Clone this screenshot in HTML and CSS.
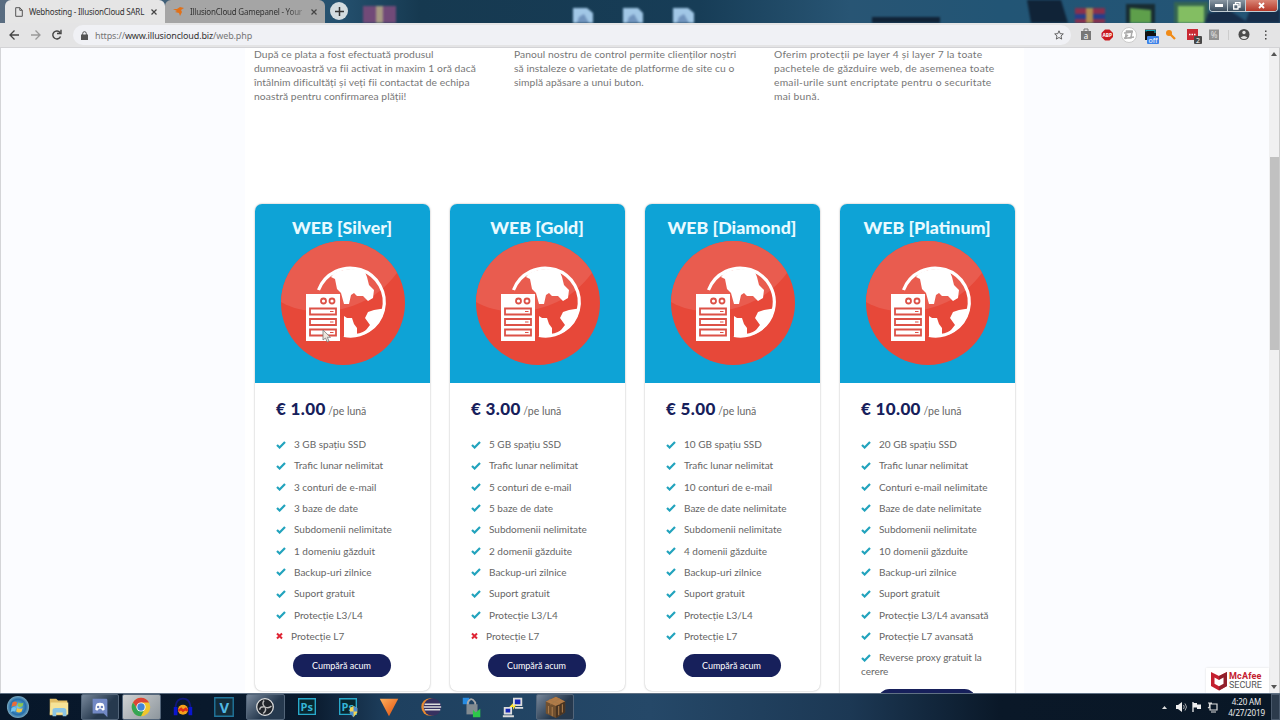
FILE: index.html
```html
<!DOCTYPE html>
<html lang="ro">
<head>
    <meta charset="UTF-8">
    <title>Webhosting - IllusionCloud SARL</title>
    <link rel="stylesheet" href="styles.css">
</head>
<body>
    <svg class="defs">
        <defs>
            <linearGradient id="fox" x2="1" y2="1"><stop stop-color="#ffb05c"/><stop offset="1" stop-color="#df4d0c"/></linearGradient>
            <radialGradient id="orb"><stop stop-color="#79c8ee"/><stop offset=".7" stop-color="#256eaa"/><stop offset="1" stop-color="#7aa9bf"/></radialGradient>
            <clipPath id="disc"><circle cx="62" cy="62" r="62"/></clipPath>
            <clipPath id="globe-clip"><circle cx="70" cy="62" r="34"/></clipPath>
            <symbol id="hosting" viewBox="0 0 124 124">
                <circle cx="62" cy="62" r="62" fill="#e74839"/>
                <path d="M0 0H124V20C109 45 90 61 61 68C36 73 16 70 0 61Z" fill="#e95c4f" clip-path="url(#disc)"/>
                <g clip-path="url(#globe-clip)">
                    <path d="M50 36L58 26H82L86 36L88 44L93 49L92 57L87 60L82 55L76 55L73 52L70 54L68 63L63 63L60 52L56 48L54 38Z" fill="#fff"/>
                    <path d="M63 75L66 77H71L73 83L76 87V100H63ZM79 100L81 94L89 84L84 77L87 71L93 69L106 67V99Z" fill="#fff"/>
                </g>
                <path d="M37.500 49A34 34 0 1 1 63 94.500" fill="none" stroke="#fff" stroke-width="3.200"/>
                <path d="M25 53H59V100H25Z" fill="#fff"/>
                <g fill="none" stroke="#dc5147" stroke-width="1.800">
                    <circle cx="42.500" cy="60" r="2.500"/><circle cx="51" cy="60" r="2.500"/>
                    <path d="M29 67.500H55V73.500H29ZM29 78H55V84H29ZM29 88.500H55V94.500H29Z"/>
                    <path d="M49 70.500H52.500M49 81H52.500M49 91.500H52.500" stroke-width="1.200"/>
                </g>
            </symbol>
            <symbol id="check" viewBox="0 0 10 8"><path d="M1 4L3.600 6.500L9 1" fill="none" stroke="#22a3bd" stroke-width="2.200"/></symbol>
            <symbol id="cross" viewBox="0 0 8 8"><path d="M1 1.500L6 6.500M6 1.500L1 6.500" fill="none" stroke="#df2434" stroke-width="2"/></symbol>
            <symbol id="close" viewBox="0 0 8 8"><path d="M1.500 1.500L6.500 6.500M6.500 1.500L1.500 6.500" fill="none" stroke="#444" stroke-width="1.200"/></symbol>
        </defs>
    </svg>

    <div class="browser">
        <div class="tabbar">
            <div class="tab active">
                <svg width="8" height="10" viewBox="0 0 8 10"><path d="M.7.7H4.800L7.300 3.300V9.300H.7ZM4.800.7V3.300H7.300" fill="none" stroke="#555"/></svg>
                <span>Webhosting - IllusionCloud SARL</span>
                <svg class="tab-close" width="8" height="8"><use href="#close"/></svg>
            </div>
            <div class="tab">
                <svg width="11" height="9" viewBox="0 0 11 9"><path d="M0 2L4 2L7 0L11 1L8 3L9 5L7 9L6 6L2 5L4 4Z" fill="#e17018"/></svg>
                <span class="fade">IllusionCloud Gamepanel - Your</span>
                <svg class="tab-close" width="8" height="8"><use href="#close"/></svg>
            </div>
            <div class="new-tab"><svg width="9" height="9" viewBox="0 0 9 9"><path d="M4.500 0V9M0 4.500H9" stroke="#333" stroke-width="1.500"/></svg></div>
            <!-- desktop showing through the glass frame -->
            <svg class="wallpaper" width="925" height="23" viewBox="355 0 925 23">
                <g class="soft">
                    <path d="M363 6H396V23H363Z" fill="#714a78"/><path d="M376 6H383V23H376Z" fill="#a69a83"/>
                    <path d="M573 8H587L593 13V23H573ZM623 8H638L643 13V23H623ZM673 8H688L694 13V23H673Z" fill="#a1c7e6"/>
                    <path d="M579 17L584 14L589 23H577ZM629 17L634 14L639 23H627ZM679 17L684 14L689 23H677Z" fill="#7194bd"/>
                    <path d="M872 17H940V23H872ZM1027 0H1061L1068 23H1031Z" fill="#102337"/>
                    <path d="M1075 8H1105V23H1075Z" fill="#8a304c"/><path d="M1075 14H1105V19H1075Z" fill="#263e8b"/><path d="M1086 8H1093V23H1086Z" fill="#ae8d52"/>
                    <path d="M1126 4H1155V23H1126Z" fill="#182c32"/><path d="M1130 8L1151 10V23H1130Z" fill="#5e9f4b"/>
                    <path d="M1174 2H1208V23H1174Z" fill="#366652"/><path d="M1178 6H1204V23H1178Z" fill="#83be62"/>
                    <path d="M1208 13L1229 10L1249 23H1205ZM1250 10H1280V23H1245Z" fill="#172d49"/>
                </g>
            </svg>
            <div class="window-buttons">
                <div><svg width="8" height="3"><path d="M0 0H8V3H0Z" fill="#fff"/></svg></div>
                <div><svg width="8" height="8" viewBox="0 0 8 8"><path d="M2.500 2V.7H7V5H5.500M.7 2.700H5V7H.7Z" fill="none" stroke="#fff" stroke-width="1.300"/></svg></div>
                <div class="win-close"><svg width="7" height="7" viewBox="0 0 7 7"><path d="M1 1L6 6M6 1L1 6" stroke="#fff" stroke-width="1.800"/></svg></div>
            </div>
        </div>

        <div class="toolbar">
            <svg class="nav" width="64" height="12" viewBox="0 0 64 12">
                <path d="M10 6H1M5.500 1.500L1 6L5.500 10.500" fill="none" stroke="#444" stroke-width="1.300"/>
                <path d="M22 6H31M26.500 1.500L31 6L26.500 10.500" fill="none" stroke="#999" stroke-width="1.300"/>
                <path d="M51 3.500A4 4 0 1 0 51.500 7.500M52 .7V4.500H48" fill="none" stroke="#444" stroke-width="1.400"/>
            </svg>
            <div class="address">
                <svg width="7" height="9" viewBox="0 0 7 9"><path d="M0 3.500H7V9H0Z" fill="#555"/><path d="M1.700 4V2.500A1.800 1.800 0 0 1 5.300 2.500V4" fill="none" stroke="#555"/></svg>
                <span class="url">https://<b>www.illusioncloud.biz</b>/web.php</span>
                <svg class="star" width="10" height="10" viewBox="0 0 10 10"><path d="M5 .8L6.200 3.700L9.300 3.900L7 6L7.700 9.100L5 7.500L2.300 9.100L3 6L.7 3.900L3.800 3.700Z" fill="none" stroke="#555" stroke-width=".9"/></svg>
            </div>
            <svg class="extensions" width="196" height="22" viewBox="1078 24 196 22">
                <path d="M1081 31H1091V40H1081Z" fill="#777"/><path d="M1084 31V29H1088V31" fill="none" stroke="#777"/>
                <text x="1083.700" y="38.500" font-size="8" fill="#fff">a</text>
                <path d="M1105 29.500H1109.500L1113 33V37L1109.500 40.500H1105L1101.500 37V33Z" fill="#c91a21"/>
                <text x="1102.500" y="37.200" font-size="6" font-weight="bold" fill="#fff" textLength="9.500" lengthAdjust="spacingAndGlyphs">ABP</text>
                <circle cx="1129" cy="35" r="7.500" fill="#fff" stroke="#ccc"/>
                <path d="M1126.500 31H1132L1131 38H1125.500ZM1124 33L1133 32M1124.500 38.500L1134 37M1124 38.500L1128 35" fill="none" stroke="#aaa" stroke-width="1.500"/>
                <path d="M1145 29.500H1156V40H1145Z" fill="#111"/><path d="M1146 31.500V30.500H1155V33" fill="none" stroke="#11a7be" stroke-width="1.200"/>
                <rect x="1147" y="36" width="12" height="8" rx="1" fill="#3d82e8"/><text x="1148.500" y="42.500" font-size="7" fill="#fff">off</text>
                <circle cx="1169" cy="33" r="3" fill="#f18b18"/><path d="M1170 34L1175 39" stroke="#f18b18" stroke-width="2.300"/>
                <path d="M1187 29H1198V40H1187Z" fill="#c92934"/><path d="M1189 34.500H1196" stroke="#fff" stroke-width="1.500" stroke-dasharray="1.500 1"/>
                <rect x="1194" y="36" width="8" height="8" rx="1" fill="#484848"/><text x="1196" y="42.500" font-size="7" fill="#fff">2</text>
                <path d="M1209 29.500H1219V40H1209Z" fill="#929292"/><text x="1210.700" y="37.800" font-size="8" fill="#e0e0e0">%</text>
                <path d="M1228.500 30V40" stroke="#ccc"/>
                <circle cx="1244" cy="34.500" r="5.500" fill="#4c4c4c"/><circle cx="1244" cy="32.500" r="1.700" fill="#e3e3e3"/><path d="M1240.500 37.500Q1244 34.300 1247.500 37.500Q1244 40.500 1240.500 37.500" fill="#e3e3e3"/>
                <path d="M1265 30.500H1266.500V32H1265ZM1265 34.200H1266.500V35.700H1265ZM1265 38H1266.500V39.500H1265Z" fill="#444"/>
            </svg>
        </div>

        <div class="viewport">
            <div class="page">
                <div class="intro">
                    <p>După ce plata a fost efectuată produsul<br>dumneavoastră va fii activat in maxim 1 oră dacă<br>întâlnim dificultăți și veți fii contactat de echipa<br>noastră pentru confirmarea plății!</p>
                    <p>Panoul nostru de control permite clienților noștri<br>să instaleze o varietate de platforme de site cu o<br>simplă apăsare a unui buton.</p>
                    <p class="wide">Oferim protecții pe layer 4 și layer 7 la toate<br>pachetele de găzduire web, de asemenea toate<br>email-urile sunt encriptate pentru o securitate<br>mai bună.</p>
                </div>
                <div class="plans" id="plans"></div>
            </div>
            <div class="scrollbar">
                <svg width="6" height="4"><path d="M0 4L3 0L6 4Z" fill="#555"/></svg>
                <div class="thumb"></div>
                <svg width="6" height="4"><path d="M0 0L3 4L6 0Z" fill="#555"/></svg>
            </div>
            <div class="mcafee">
                <svg width="18" height="20" viewBox="0 0 18 20"><path d="M1 1L9 5L17 1V15L9 19.500L1 15Z" fill="#c4202f"/><path d="M9 5L17 1V15L9 19.500Z" fill="#92202b"/><path d="M4.500 6.500L9 9L13.500 6.500V12.700L9 15.300L4.500 12.700Z" fill="#fff"/></svg>
                <div class="mcafee-text"><b>McAfee</b><span>SECURE</span></div>
            </div>
            <svg class="cursor" width="10" height="14" viewBox="0 0 10 14"><path d="M1 1V11L3.500 9L5.200 13L7 12L5.300 8.300H8.500Z" fill="#eee5dd" stroke="#777" stroke-width=".8"/></svg>
        </div>
    </div>

    <div class="taskbar">
        <div class="task start"><svg viewBox="0 0 26 26"><circle cx="13" cy="13" r="12" fill="url(#orb)"/><path d="M7 8Q10 6 12 8L11 12Q9 11 6 13Z" fill="#e96b38"/><path d="M13.500 8Q16 10 19 8L18 12Q15 14 12.500 12Z" fill="#8cc653"/><path d="M6 14Q9 12 11 14L10 18Q7 17 5 19Z" fill="#73c4ef"/><path d="M12 14Q15 16 18 14L17 18Q14 20 11 18Z" fill="#f6c643"/></svg></div>
        <div class="task"><svg viewBox="0 0 26 26"><path d="M3 4H10L12 6H22V22H3Z" fill="#e2bd65"/><path d="M4 8H23V21H3Z" fill="#f6e397"/><path d="M6 23V16Q6 14 9 14H18Q21 14 21 17V23H17V19H10V23Z" fill="#8ac5e5"/></svg></div>
        <div class="task open"><svg viewBox="0 0 26 26"><path d="M5 4H20Q21 4 21 6V24L17 20H5Z" fill="#7289c5"/><path d="M8 16Q8 10 10 9Q13 8 16 9Q18 10 18 16L16 17L14 15H12L10 17Z" fill="#fff"/><circle cx="11" cy="13" r="1.300" fill="#687eb9"/><circle cx="15" cy="13" r="1.300" fill="#687eb9"/></svg></div>
        <div class="task current"><svg viewBox="0 0 26 26"><circle cx="13" cy="13" r="10" fill="#f0c52d"/><path d="M4.300 8A10 10 0 0 1 21.700 8H13L9 15Z" fill="#db4437"/><path d="M4.300 8L9 15H17L13 23A10 10 0 0 1 4.300 8" fill="#35a554"/><circle cx="13" cy="13" r="5" fill="#fff"/><circle cx="13" cy="13" r="4" fill="#4285d8"/></svg></div>
        <div class="task"><svg viewBox="0 0 26 26"><path d="M5 20V12Q6 4 13 4Q20 4 21 12V20" fill="none" stroke="#10187c" stroke-width="2"/><path d="M3 13H7V22H3ZM19 13H23V22H19Z" fill="#0b15cf"/><circle cx="13" cy="16" r="5.500" fill="#f3a21b"/><path d="M8 17L11 15L13 17L16 15L18 17" fill="none" stroke="#dd2b18" stroke-width="2.500"/></svg></div>
        <div class="task"><svg viewBox="0 0 26 26"><path d="M3 3H23V23H3Z" fill="#132c3a" stroke="#21769c" stroke-width="1.500"/><text x="8" y="19" font-size="16" font-weight="bold" fill="#51b9e5">V</text></svg></div>
        <div class="task open"><svg viewBox="0 0 26 26"><circle cx="13" cy="13" r="9" fill="#20242a" stroke="#ddd" stroke-width="1.400"/><path d="M12 6Q9 10 13 13Q17 15 20 12M13 13Q8 12 7 16M13 13Q15 17 11 20" fill="none" stroke="#bbb" stroke-width="1.500"/></svg></div>
        <div class="task"><svg viewBox="0 0 26 26"><path d="M4 4H22V21H4Z" fill="#08262f" stroke="#28a9cb" stroke-width="1.500"/><text x="6" y="17" font-size="12" font-weight="bold" fill="#35b5d5">Ps</text></svg></div>
        <div class="task"><svg viewBox="0 0 26 26"><path d="M4 4H22V21H4Z" fill="#08262f" stroke="#28a9cb" stroke-width="1.500"/><text x="6" y="17" font-size="12" font-weight="bold" fill="#35b5d5">Ps</text><path d="M15 14L19 12L23 14V19L19 24L15 19Z" fill="#f4d452"/><path d="M19 12L23 14V18H19ZM15 18H19V24L15 20Z" fill="#4d8bd0"/></svg></div>
        <div class="task"><svg viewBox="0 0 26 26"><path d="M3 4H23L13 23Z" fill="url(#fox)"/></svg></div>
        <div class="task"><svg viewBox="0 0 26 26"><circle cx="12" cy="13" r="9.500" fill="#e9892d"/><circle cx="14.500" cy="13" r="9.500" fill="#373160"/><path d="M6 10H23M5 13H24M6 16H23" stroke="#ddd" stroke-width="1.500"/></svg></div>
        <div class="task"><svg viewBox="0 0 26 26"><path d="M3 3H10V10H3Z" fill="#268be2"/><path d="M8.500 11V8Q12 1 16.500 8V11" fill="none" stroke="#aaa" stroke-width="2"/><path d="M7 10H19V21H7Z" fill="#828b91"/><path d="M14 16L17 19L22 15V24H14Z" fill="#2dc84a"/></svg></div>
        <div class="task"><svg viewBox="0 0 26 26"><path d="M13 3H23V12H13ZM3 13H12V21H3ZM15 13H24V15H15ZM2 22H14V24H2Z" fill="#ddd"/><path d="M15 5H21V10H15ZM5 15H10V19H5Z" fill="#1626b7"/><path d="M9 13L13 9V12L17 10L13 16V13Z" fill="#ffe12d"/></svg></div>
        <div class="task open"><svg viewBox="0 0 26 26"><path d="M3 7L14 2L24 7V19L14 25L3 20Z" fill="#71502f"/><path d="M3 7L14 2L24 7L14 12Z" fill="#b17b48"/><path d="M14 12L24 7V19L14 25Z" fill="#493422"/><path d="M7 5L18 10M18 4L8 10M6 12V20M10 13V23M17 12V22M21 10V19" stroke="#a87a4a" stroke-width="1.200"/></svg></div>
        <svg class="tray" width="60" height="14" viewBox="1158 700 60 14">
            <path d="M1162 709L1164.500 706L1167 709Z" fill="#ddd"/>
            <path d="M1176 705H1178L1182 702V712L1178 709H1176Z" fill="#eee"/><path d="M1183.500 705Q1185 707 1183.500 709M1185 703.500Q1188 707 1185 710.500" fill="none" stroke="#ccc" stroke-width=".8"/>
            <path d="M1193 702V712" stroke="#eee" stroke-width="1.300"/><path d="M1193 703H1197V704.500H1201V709H1197V707.500H1193Z" fill="#eee"/>
            <path d="M1210 704H1217V710H1210ZM1208 703H1212M1209.500 703V707L1208 708M1211 712H1216" fill="none" stroke="#ddd" stroke-width="1.200"/>
        </svg>
        <div class="clock">4:20 AM<br>4/27/2019</div>
        <div class="show-desktop"></div>
    </div>

    <script>
        const plans = [
            { name: 'Silver', price: '1.00', features: ['3 GB spațiu SSD', 'Trafic lunar nelimitat', '3 conturi de e-mail', '3 baze de date', 'Subdomenii nelimitate', '1 domeniu găzduit', 'Backup-uri zilnice', 'Suport gratuit', 'Protecție L3/L4'], missing: ['Protecție L7'] },
            { name: 'Gold', price: '3.00', features: ['5 GB spațiu SSD', 'Trafic lunar nelimitat', '5 conturi de e-mail', '5 baze de date', 'Subdomenii nelimitate', '2 domenii găzduite', 'Backup-uri zilnice', 'Suport gratuit', 'Protecție L3/L4'], missing: ['Protecție L7'] },
            { name: 'Diamond', price: '5.00', features: ['10 GB spațiu SSD', 'Trafic lunar nelimitat', '10 conturi de e-mail', 'Baze de date nelimitate', 'Subdomenii nelimitate', '4 domenii găzduite', 'Backup-uri zilnice', 'Suport gratuit', 'Protecție L3/L4', 'Protecție L7'], missing: [] },
            { name: 'Platinum', price: '10.00', features: ['20 GB spațiu SSD', 'Trafic lunar nelimitat', 'Conturi e-mail nelimitate', 'Baze de date nelimitate', 'Subdomenii nelimitate', '10 domenii găzduite', 'Backup-uri zilnice', 'Suport gratuit', 'Protecție L3/L4 avansată', 'Protecție L7 avansată', 'Reverse proxy gratuit la<br>cerere'], missing: [] }
        ];

        document.getElementById('plans').innerHTML = plans.map(plan => `
            <div class="plan">
                <div class="plan-header">
                    <h2>WEB [${plan.name}]</h2>
                    <svg width="124" height="124"><use href="#hosting"/></svg>
                </div>
                <div class="plan-body">
                    <div class="price"><b>€ ${plan.price}</b> <span>/pe lună</span></div>
                    <ul>
                        ${plan.features.map(f => `<li><svg class="check" width="10" height="8"><use href="#check"/></svg>${f}</li>`).join('')}
                        ${plan.missing.map(f => `<li><svg class="cross" width="8" height="8"><use href="#cross"/></svg>${f}</li>`).join('')}
                    </ul>
                    <a class="buy">Cumpără acum</a>
                </div>
            </div>`).join('');
    </script>
</body>
</html>
```
FILE: styles.css
```css
* {
    box-sizing: border-box;
}

body {
    margin: 0;
    width: 1280px;
    height: 720px;
    overflow: hidden;
    font-family: Lato, sans-serif;
}

svg {
    display: block;
    flex: none;
}

.defs {
    position: absolute;
    width: 0;
    height: 0;
}

.browser {
    height: 693px;
    display: flex;
    flex-direction: column;
}

.tabbar {
    height: 23px;
    flex: none;
    display: flex;
    position: relative;
    padding-left: 5px;
    background: linear-gradient(90deg, #5a6d81 0, #24506e 340px, #163950 420px, #173d57 700px, #285574 850px, #225575 1000px, #245475 1280px);
}

.tab {
    width: 160px;
    display: flex;
    align-items: center;
    padding: 0 7px 0 8px;
    background: #a5a5a5;
    border-radius: 6px 6px 0 0;
    font: 8px "Noto Sans", sans-serif;
    letter-spacing: -.22px;
    color: #333;
    white-space: nowrap;
}

.tab.active {
    padding-left: 10px;
    background: #e5e5e5;
}

.tab span {
    margin-left: 6px;
}

.tab .fade {
    mask-image: linear-gradient(90deg, #000 85%, rgba(0, 0, 0, .4));
}

.tab-close {
    margin-left: auto;
}

.new-tab {
    width: 18px;
    height: 18px;
    margin: 2px 0 0 5px;
    border-radius: 50%;
    background: #d4dce0;
    display: flex;
    align-items: center;
    justify-content: center;
}

.wallpaper {
    margin-left: 7px;
}

.soft {
    filter: blur(1.200px);
}

.window-buttons {
    position: absolute;
    right: 2px;
    top: 0;
    height: 12px;
    display: flex;
    border: 1px solid #c0ccd3;
    border-top: 0;
    border-radius: 0 0 4px 4px;
    overflow: hidden;
}

.window-buttons div {
    width: 18px;
    display: flex;
    align-items: center;
    justify-content: center;
    background: linear-gradient(#8997a3, #3b4d5e);
    border-right: 1px solid #c0ccd3;
}

.window-buttons .win-close {
    width: 31px;
    border: 0;
    background: linear-gradient(#d98575, #b63829);
}

.toolbar {
    height: 25px;
    flex: none;
    display: flex;
    align-items: center;
    padding-left: 9px;
    background: #e4e4e5;
    border-bottom: 1px solid #d3d3d6;
}

.address {
    width: 998px;
    height: 20px;
    border-radius: 10px;
    background: #f0f1f5;
    display: flex;
    align-items: center;
    padding: 0 7px 0 8px;
}

.url {
    margin-left: 7px;
    font: 9px "Noto Sans", sans-serif;
    letter-spacing: -.14px;
    color: #777;
}

.url b {
    font-weight: 400;
    color: #333;
}

.star {
    margin-left: auto;
}

.extensions {
    margin-left: 7px;
    font-family: "Noto Sans", sans-serif;
}

.viewport {
    flex: 1;
    min-height: 0;
    display: flex;
    position: relative;
    overflow: hidden;
    background: #fbfcff;
    border-left: 1px solid #d4d5d8;
}

.page {
    width: 779px;
    margin-left: 244px;
    background: #fff;
}

.intro {
    height: 156px;
    display: flex;
    padding-left: 9px;
}

.intro p {
    width: 260px;
    flex: none;
    margin: -1px 0 0;
    font-size: 10.300px;
    line-height: 14px;
    color: #777;
    white-space: nowrap;
    letter-spacing: .07px;
}

.intro .wide {
    letter-spacing: .23px;
}

.plans {
    display: flex;
    align-items: flex-start;
    gap: 20px;
    padding-left: 9.500px;
}

.plan {
    width: 175px;
    flex: none;
    border-radius: 7px;
    background: #fff;
    box-shadow: 0 0 2px #aaa;
    overflow: hidden;
}

.plan-header {
    height: 178.500px;
    padding-top: 12px;
    display: flex;
    flex-direction: column;
    align-items: center;
    background: #0ea3d6;
}

.plan-header h2 {
    margin: 0 0 3px;
    height: 22px;
    font-size: 17.800px;
    line-height: 22px;
    font-weight: 900;
    color: #e9faff;
}

.plan-header svg {
    margin-left: 1px;
}

.plan-body {
    padding: 16.500px 0 14px 21.500px;
}

.price {
    height: 20px;
    margin-bottom: 15px;
    line-height: 20px;
    color: #666;
    font-size: 10.500px;
    white-space: nowrap;
}

.price b {
    font-size: 17px;
    font-weight: 900;
    letter-spacing: .35px;
    color: #17205b;
}

ul {
    list-style: none;
    margin: 0;
    padding: 0;
    color: #666;
}

li {
    font-size: 10px;
    line-height: 13.330px;
    padding: 4px 0;
    white-space: nowrap;
}

li svg {
    display: inline-block;
    vertical-align: -.5px;
}

.check {
    margin-right: 8px;
}

.cross {
    margin-right: 7px;
}

.buy {
    display: block;
    width: 98px;
    height: 23px;
    margin: 7px 0 0 16.500px;
    border-radius: 12px;
    background: #17205b;
    color: #fff;
    font-size: 9px;
    line-height: 23px;
    text-align: center;
}

.scrollbar {
    width: 11px;
    margin-left: auto;
    background: #f0f0f1;
    border-right: 1px solid #ccc;
    display: flex;
    flex-direction: column;
    align-items: center;
    padding: 4px 0;
}

.thumb {
    width: 9px;
    height: 193px;
    margin: 101px 0 auto;
    background: #c1c1c1;
}

.mcafee {
    position: absolute;
    right: 11px;
    bottom: 0;
    width: 63px;
    height: 25px;
    padding-left: 4px;
    display: flex;
    align-items: center;
    gap: 1px;
    background: #fff;
    box-shadow: 0 0 2px #ddd;
}

.mcafee-text {
    display: flex;
    flex-direction: column;
    font: 9px/9px Roboto, sans-serif;
    color: #555;
}

.mcafee-text b {
    color: #c4202f;
    letter-spacing: .2px;
}

.cursor {
    position: absolute;
    left: 321px;
    top: 281px;
}

.taskbar {
    height: 27px;
    display: flex;
    align-items: center;
    background: linear-gradient(90deg, #07172a, #0a1a2d 310px, #1e405f 390px, #254868 650px, #1c3854 850px, #0a1828 1000px, #091726);
    border-top: 1px solid #607184;
    color: #eee;
}

.task {
    width: 38.350px;
    height: 26px;
    flex: none;
    margin-right: 3px;
    display: flex;
    align-items: center;
    justify-content: center;
    font-family: "Open Sans", sans-serif;
}

.task svg {
    width: 24px;
    height: 24px;
}

.task.start {
    width: 36.500px;
}

.task.open,
.task.current {
    border: 1px solid #536579;
    border-radius: 2px;
    background: linear-gradient(135deg, #77879a, #26394e 60%);
}

.task.current {
    background: linear-gradient(135deg, #d0d2d3, #8d969d);
}

.tray {
    margin-left: auto;
}

.clock {
    width: 49px;
    margin-left: 4px;
    text-align: center;
    font: 8px/11.500px "Noto Sans", sans-serif;
    letter-spacing: -.15px;
}

.show-desktop {
    width: 9px;
    height: 26px;
    background: #2c3b4c;
    border: 1px solid #4a596b;
}
```
